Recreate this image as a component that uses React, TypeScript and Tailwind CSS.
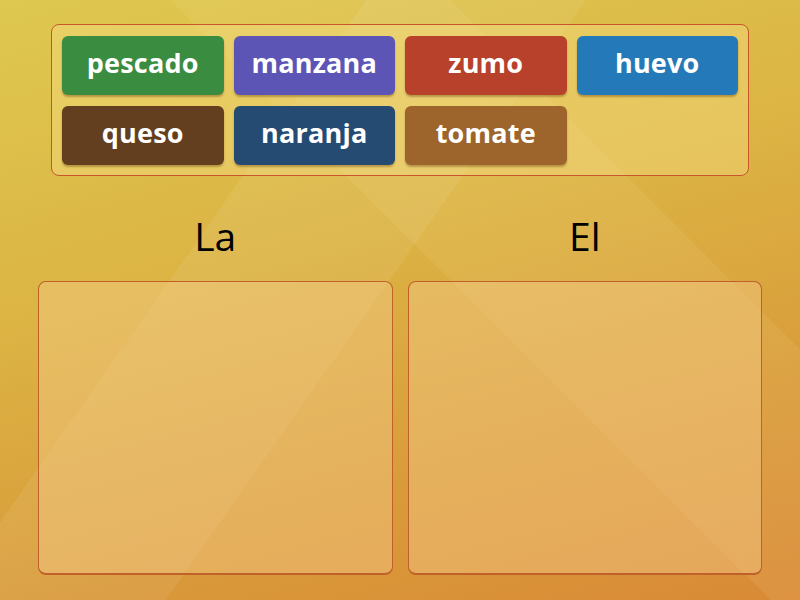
const words = [
  { text: "pescado", color: "bg-[#3a8c40]" },
  { text: "manzana", color: "bg-[#5d55b6]" },
  { text: "zumo", color: "bg-[#b8412c]" },
  { text: "huevo", color: "bg-[#247ab9]" },
  { text: "queso", color: "bg-[#633f20]" },
  { text: "naranja", color: "bg-[#264b73]" },
  { text: "tomate", color: "bg-[#9d642c]" },
]

const groups = ["La", "El"]

export default function App() {
  return (
    <div
      className="h-[600px] w-[800px] overflow-hidden bg-[linear-gradient(125deg,transparent_30%,rgba(255,255,255,0.07)_30%,rgba(255,255,255,0.07)_48%,transparent_48%),linear-gradient(45deg,transparent_55%,rgba(255,240,200,0.08)_55%,rgba(255,240,200,0.08)_75%,transparent_75%),linear-gradient(165deg,#dec84f_0%,#dcb444_40%,#d99c3a_72%,#d98a36_100%)] font-['Open_Sans','Noto_Sans',sans-serif]"
    >
      <div className="flex flex-col items-center pt-6">
        <div className="grid w-[698px] grid-cols-4 gap-x-[10px] gap-y-[11px] rounded-lg border border-[#c8562a] bg-[rgba(250,225,140,0.38)] px-[10px] pt-[11px] pb-[10px]">
          {words.map((w) => (
            <div
              key={w.text}
              className={`flex h-[59px] items-center justify-center rounded-md pb-1 ${w.color} text-[27px] font-bold tracking-[0.2px] text-white shadow-[0_2px_2px_rgba(90,50,0,0.35)]`}
            >
              {w.text}
            </div>
          ))}
        </div>

        <div className="mt-[36px] flex w-[724px] gap-[15px]">
          {groups.map((g) => (
            <div key={g} className="flex flex-1 flex-col items-center">
              <div className="h-[48px] text-[39px] leading-[48px] font-medium text-black">{g}</div>
              <div className="mt-[21px] h-[294px] w-full rounded-lg border border-[#c0602a] border-b-2 bg-[rgba(245,205,140,0.42)]" />
            </div>
          ))}
        </div>
      </div>
    </div>
  )
}
